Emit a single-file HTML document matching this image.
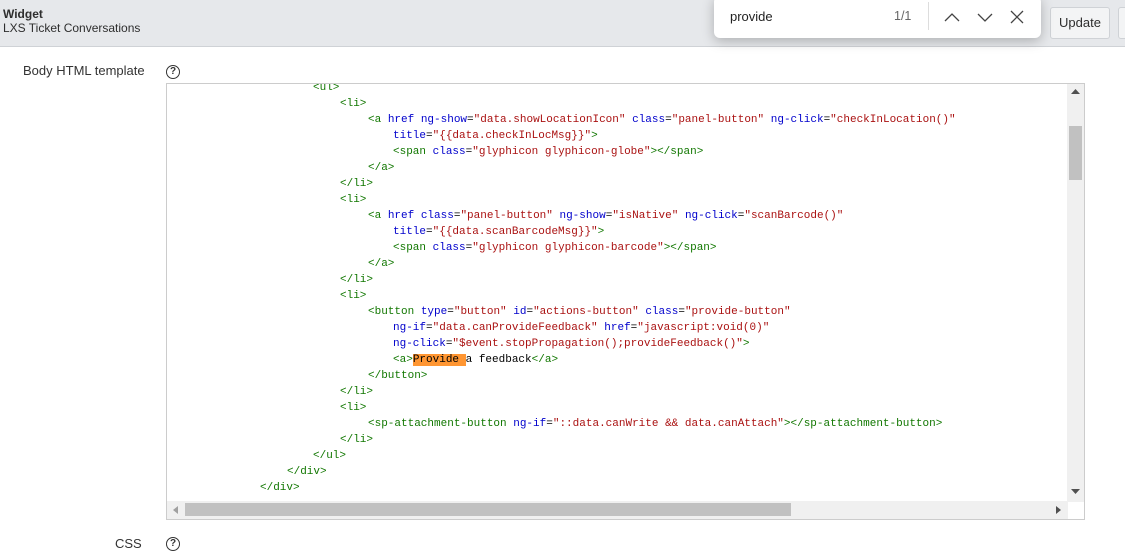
<!DOCTYPE html>
<html><head><meta charset="utf-8"><style>
*{margin:0;padding:0;box-sizing:border-box}
body{width:1125px;height:548px;overflow:hidden;background:#fff;font-family:"Liberation Sans",sans-serif;position:relative}
.hdr{position:absolute;left:0;top:0;width:1125px;height:47px;background:#e6e8eb;border-bottom:1px solid #cfd2d6}
.hdr .t1{position:absolute;left:3px;top:7px;font-size:12px;font-weight:bold;color:#2e2e2e}
.hdr .t2{position:absolute;left:3px;top:21px;font-size:12px;color:#2e2e2e}
.btn{position:absolute;left:1050px;top:7px;width:60px;height:32px;border:1px solid #cfd2d6;border-radius:3px;background:#f3f4f5;font-size:13px;color:#2e2e2e;text-align:center;line-height:30px}
.btn2{position:absolute;left:1118px;top:7px;width:20px;height:32px;border:1px solid #cfd2d6;border-radius:3px;background:#f3f4f5}
.find{position:absolute;left:714px;top:-4px;width:327px;height:42px;background:#fff;border-radius:6px;box-shadow:0 3px 12px rgba(0,0,0,.25)}
.find .q{position:absolute;left:16px;top:13px;font-size:13px;color:#222}
.find .n{position:absolute;left:180px;top:13px;font-size:12.5px;color:#666}
.find .sep{position:absolute;left:214px;top:6px;width:1px;height:28px;background:#ddd}
.lbl{position:absolute;font-size:13px;color:#333}
.help{position:absolute;width:14px;height:14px;border:1.3px solid #333;border-radius:50%;font-size:10px;font-weight:bold;text-align:center;line-height:12px;color:#333}
.ed{position:absolute;left:166px;top:83px;width:919px;height:437px;border:1px solid #ccc;background:#fff;overflow:hidden}
.code{position:absolute;left:0;top:-4px;font-family:"Liberation Mono",monospace;font-size:11px;line-height:16px;white-space:pre}
.code div{position:absolute;white-space:pre}
.t{color:#170}.a{color:#00c}.s{color:#a11}.x{color:#000}
.hl{background:#ff9632}
.vs{position:absolute;right:0;top:0;width:17px;height:418px;background:#f0f0f0}
.vt{position:absolute;left:2px;top:42px;width:13px;height:54px;background:#c1c1c1}
.hs{position:absolute;left:0;bottom:0;width:901px;height:18px;background:#f0f0f0}
.ht{position:absolute;left:18px;top:2px;width:606px;height:13px;background:#c1c1c1}
</style></head><body>
<div class="hdr"><div class="t1">Widget</div><div class="t2">LXS Ticket Conversations</div>
<div class="btn">Update</div><div class="btn2"></div></div>
<div class="find"><div class="q">provide</div><div class="n">1/1</div><div class="sep"></div>
<svg style="position:absolute;left:230px;top:12px" width="84" height="18" viewBox="0 0 84 18" fill="none" stroke="#444" stroke-width="1.3"><path d="M1 13 L8 6 L15 13"/><path d="M34 6 L41 13 L48 6"/><path d="M67 3 L79 15 M79 3 L67 15"/></svg></div>
<div class="lbl" style="left:23px;top:63px">Body HTML template</div>
<div class="help" style="left:166px;top:65px">?</div>
<div class="ed"><div class="code">
<div style="left:146px;top:0"><span class="t">&lt;ul&gt;</span></div>
<div style="left:173px;top:16px"><span class="t">&lt;li&gt;</span></div>
<div style="left:201px;top:32px"><span class="t">&lt;a</span> <span class="a">href</span> <span class="a">ng-show</span>=<span class="s">"data.showLocationIcon"</span> <span class="a">class</span>=<span class="s">"panel-button"</span> <span class="a">ng-click</span>=<span class="s">"checkInLocation()"</span></div>
<div style="left:226px;top:48px"><span class="a">title</span>=<span class="s">"{{data.checkInLocMsg}}"</span><span class="t">&gt;</span></div>
<div style="left:226px;top:64px"><span class="t">&lt;span</span> <span class="a">class</span>=<span class="s">"glyphicon glyphicon-globe"</span><span class="t">&gt;&lt;/span&gt;</span></div>
<div style="left:201px;top:80px"><span class="t">&lt;/a&gt;</span></div>
<div style="left:173px;top:96px"><span class="t">&lt;/li&gt;</span></div>
<div style="left:173px;top:112px"><span class="t">&lt;li&gt;</span></div>
<div style="left:201px;top:128px"><span class="t">&lt;a</span> <span class="a">href</span> <span class="a">class</span>=<span class="s">"panel-button"</span> <span class="a">ng-show</span>=<span class="s">"isNative"</span> <span class="a">ng-click</span>=<span class="s">"scanBarcode()"</span></div>
<div style="left:226px;top:144px"><span class="a">title</span>=<span class="s">"{{data.scanBarcodeMsg}}"</span><span class="t">&gt;</span></div>
<div style="left:226px;top:160px"><span class="t">&lt;span</span> <span class="a">class</span>=<span class="s">"glyphicon glyphicon-barcode"</span><span class="t">&gt;&lt;/span&gt;</span></div>
<div style="left:201px;top:176px"><span class="t">&lt;/a&gt;</span></div>
<div style="left:173px;top:192px"><span class="t">&lt;/li&gt;</span></div>
<div style="left:173px;top:208px"><span class="t">&lt;li&gt;</span></div>
<div style="left:201px;top:224px"><span class="t">&lt;button</span> <span class="a">type</span>=<span class="s">"button"</span> <span class="a">id</span>=<span class="s">"actions-button"</span> <span class="a">class</span>=<span class="s">"provide-button"</span></div>
<div style="left:226px;top:240px"><span class="a">ng-if</span>=<span class="s">"data.canProvideFeedback"</span> <span class="a">href</span>=<span class="s">"javascript:void(0)"</span></div>
<div style="left:226px;top:256px"><span class="a">ng-click</span>=<span class="s">"$event.stopPropagation();provideFeedback()"</span><span class="t">&gt;</span></div>
<div style="left:226px;top:272px"><span class="t">&lt;a&gt;</span><span class="x hl">Provide </span><span class="x">a feedback</span><span class="t">&lt;/a&gt;</span></div>
<div style="left:201px;top:288px"><span class="t">&lt;/button&gt;</span></div>
<div style="left:173px;top:304px"><span class="t">&lt;/li&gt;</span></div>
<div style="left:173px;top:320px"><span class="t">&lt;li&gt;</span></div>
<div style="left:201px;top:336px"><span class="t">&lt;sp-attachment-button</span> <span class="a">ng-if</span>=<span class="s">"::data.canWrite &amp;&amp; data.canAttach"</span><span class="t">&gt;&lt;/sp-attachment-button&gt;</span></div>
<div style="left:173px;top:352px"><span class="t">&lt;/li&gt;</span></div>
<div style="left:146px;top:368px"><span class="t">&lt;/ul&gt;</span></div>
<div style="left:120px;top:384px"><span class="t">&lt;/div&gt;</span></div>
<div style="left:93px;top:400px"><span class="t">&lt;/div&gt;</span></div>
</div>
<div class="vs"><div class="vt"></div>
<svg style="position:absolute;left:4px;top:5px" width="9" height="6"><path d="M0 5 L4.5 0 L9 5Z" fill="#505050"/></svg>
<svg style="position:absolute;left:4px;top:405px" width="9" height="6"><path d="M0 0 L4.5 5 L9 0Z" fill="#505050"/></svg></div>
<div class="hs"><div class="ht"></div>
<svg style="position:absolute;left:6px;top:5px" width="5" height="8"><path d="M5 0 L0 4 L5 8Z" fill="#a0a0a0"/></svg>
<svg style="position:absolute;left:889px;top:5px" width="5" height="8"><path d="M0 0 L5 4 L0 8Z" fill="#505050"/></svg></div>
</div>
<div class="lbl" style="left:115px;top:536px">CSS</div>
<div class="help" style="left:166px;top:537px">?</div>
</body></html>
